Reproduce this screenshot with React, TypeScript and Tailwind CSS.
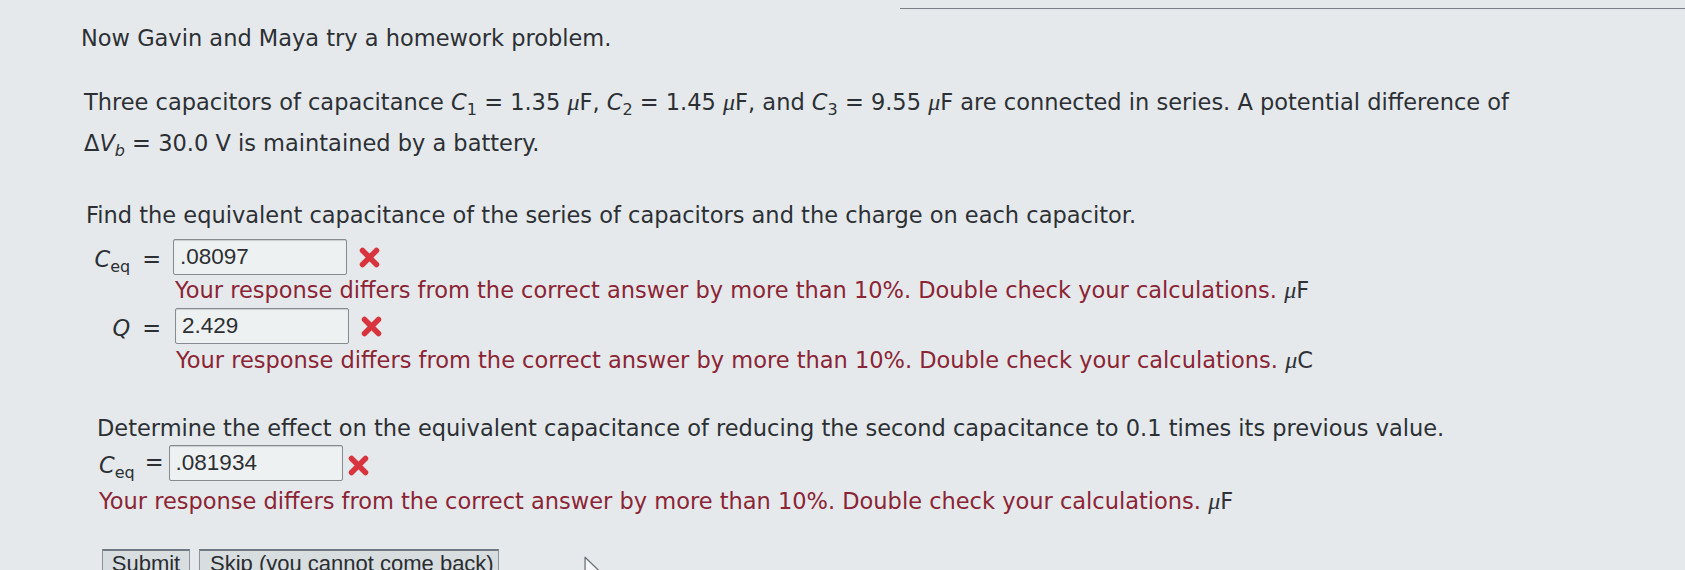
import React from "react";

const Mu = () => <span className="font-['Liberation_Serif'] italic text-[24px] leading-[0]">μ</span>;

const Sub = ({ children, italic = false }: { children: React.ReactNode; italic?: boolean }) => (
  <span className={`text-[16px] leading-[0] align-[-5px] ${italic ? "italic" : ""}`}>{children}</span>
);

const C = ({ n }: { n: string }) => (
  <span className="whitespace-nowrap">
    <span className="italic">C</span>
    <Sub>{n}</Sub>
  </span>
);

const XMark = () => (
  <svg width="23" height="23" viewBox="0 0 23 23" className="shrink-0">
    <path d="M4.5 4.5 L18.5 18.5 M18.5 4.5 L4.5 18.5" stroke="#d8343d" strokeWidth="5.5" strokeLinecap="round" />
  </svg>
);

const Box = ({ value }: { value: string }) => (
  <div className="w-[174px] h-[36px] border border-[#868b90] rounded-[2px] bg-[#eef1f2] flex items-center pl-[6px] font-['Liberation_Sans'] text-[22.5px] text-[#2c2f33] shadow-[inset_0_1px_1px_rgba(0,0,0,0.15)]">
    {value}
  </div>
);

const Err = ({ unit }: { unit: string }) => (
  <div className="text-[#8b2434] leading-[30px] whitespace-nowrap">
    Your response differs from the correct answer by more than 10%. Double check your calculations.{" "}
    <span className="text-[#2f3337]">
      <Mu />
      {unit}
    </span>
  </div>
);

export default function App() {
  return (
    <div className="relative w-[1685px] h-[570px] overflow-hidden bg-[#e5e9eb] text-[#2c3034] text-[22.5px] font-['DejaVu_Sans',_Verdana,_sans-serif]">
      <div className="h-[9px] ml-[900px] border-b border-[#7b8086]" />
      <div className="pl-[81px] pt-[13px]">
        <p className="leading-[32px]">Now Gavin and Maya try a homework problem.</p>

        <p className="mt-[28px] leading-[41px] max-w-[1450px] pl-[3px]">
          Three capacitors of capacitance <C n="1" /> = 1.35 <Mu />F, <C n="2" /> = 1.45 <Mu />F, and{" "}
          <C n="3" /> = 9.55 <Mu />F are connected in series. A potential difference of{" "}
          <span className="whitespace-nowrap">
            Δ<span className="italic">V</span>
            <Sub italic>b</Sub> = 30.0
          </span>{" "}
          V is maintained by a battery.
        </p>

        <div className="mt-[35px] pl-[5px]">
          <p className="leading-[32px]">
            Find the equivalent capacitance of the series of capacitors and the charge on each capacitor.
          </p>
          <div className="grid grid-cols-[87px_auto] mt-[8px]">
            <div className="flex items-center justify-end pr-[12px] h-[36px] pt-[6px]">
              <C n="eq" />
              <span className="ml-[12px]">=</span>
            </div>
            <div className="flex items-center gap-[11px]">
              <Box value=".08097" />
              <XMark />
            </div>
            <div />
            <div className="pl-[2px]">
              <Err unit="F" />
            </div>

            <div className="flex items-center justify-end pr-[12px] h-[36px] mt-[3px] pt-[6px]">
              <span className="italic">Q</span>
              <span className="ml-[12px]">=</span>
            </div>
            <div className="flex items-center gap-[11px] mt-[3px] pl-[2px]">
              <Box value="2.429" />
              <XMark />
            </div>
            <div />
            <div className="pl-[3px] mt-[1px]">
              <Err unit="C" />
            </div>
          </div>
        </div>

        <div className="mt-[37px] pl-[16px]">
          <p className="leading-[32px]">
            Determine the effect on the equivalent capacitance of reducing the second capacitance to 0.1 times its previous value.
          </p>
          <div className="flex items-center pl-[2px] mt-[-1px]">
            <span className="pt-[6px]">
              <C n="eq" />
            </span>
            <span className="ml-[10px] mr-[5px]">=</span>
            <Box value=".081934" />
            <span className="ml-[4px] mt-[5px]">
              <XMark />
            </span>
          </div>
          <div className="mt-[3px] pl-[2px]">
            <Err unit="F" />
          </div>

          <div className="mt-[33px] flex items-start gap-[9px] pl-[5px] font-['Liberation_Sans'] text-[22px] text-[#2a2d30]">
            <button className="w-[88px] pt-0 pb-[12px] bg-[#d8dde0] border border-[#8a949c] border-t-[2px] border-t-[#6f7a84] leading-[26px]">
              Submit
            </button>
            <button className="w-[300px] pt-0 pb-[12px] px-[10px] text-left bg-[#d8dde0] border border-[#8a949c] border-t-[2px] border-t-[#6f7a84] leading-[26px] whitespace-nowrap overflow-hidden">
              Skip (you cannot come back)
            </button>
          </div>
        </div>
      </div>

      <svg className="absolute left-[584px] top-[556px]" width="17" height="26" viewBox="0 0 16 24">
        <path d="M1 1 L1 19 L5.5 14.5 L9 22 L11.5 21 L8 13.5 L14 13.5 Z" fill="#f4f6f7" stroke="#6b7177" strokeWidth="1.2" strokeLinejoin="round" />
      </svg>
    </div>
  );
}
